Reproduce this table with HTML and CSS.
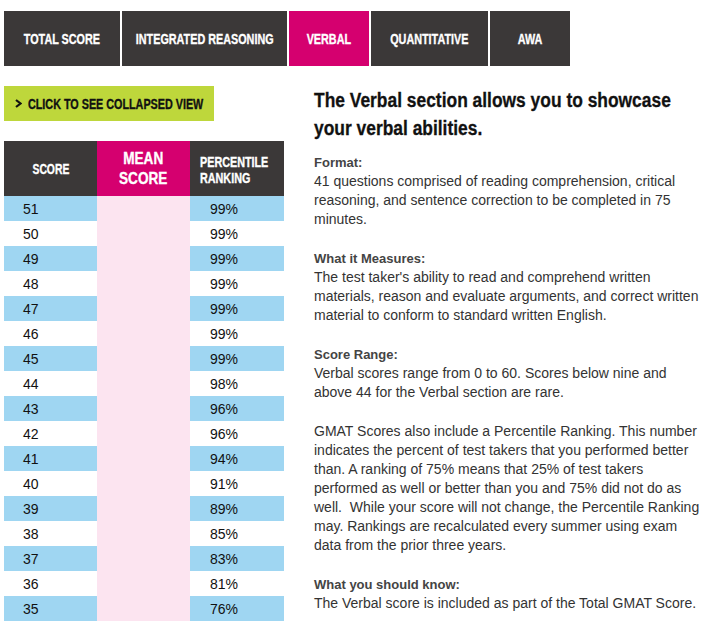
FILE: index.html
```html
<!DOCTYPE html>
<html lang="en">
<head>
<meta charset="utf-8">
<title>GMAT Verbal Scores</title>
<link rel="stylesheet" href="styles.css">
</head>
<body>
<div class="page">
  <nav class="tabs">
    <a class="tab tab-total"><span class="cond">TOTAL SCORE</span></a>
    <a class="tab tab-ir"><span class="cond">INTEGRATED REASONING</span></a>
    <a class="tab tab-verbal active"><span class="cond">VERBAL</span></a>
    <a class="tab tab-quant"><span class="cond">QUANTITATIVE</span></a>
    <a class="tab tab-awa"><span class="cond">AWA</span></a>
  </nav>
  <div class="content">
    <div class="left">
      <a class="collapse-btn"><span class="chev"><svg width="7" height="9" viewBox="0 0 7 9"><path d="M1 1 L5.5 4.5 L1 8" fill="none" stroke="#111" stroke-width="2.2"/></svg></span><span class="cond cond-left">CLICK TO SEE COLLAPSED VIEW</span></a>
      <table class="scores">
        <thead>
          <tr>
            <th class="h-score"><span class="cond">SCORE</span></th>
            <th class="h-mean"><span class="cond">MEAN<br>SCORE</span></th>
            <th class="h-pct"><span class="cond cond-left">PERCENTILE<br>RANKING</span></th>
          </tr>
        </thead>
        <tbody>
          <tr class="odd"><td class="c-score">51</td><td class="c-mean"></td><td class="c-pct">99%</td></tr>
          <tr><td class="c-score">50</td><td class="c-mean"></td><td class="c-pct">99%</td></tr>
          <tr class="odd"><td class="c-score">49</td><td class="c-mean"></td><td class="c-pct">99%</td></tr>
          <tr><td class="c-score">48</td><td class="c-mean"></td><td class="c-pct">99%</td></tr>
          <tr class="odd"><td class="c-score">47</td><td class="c-mean"></td><td class="c-pct">99%</td></tr>
          <tr><td class="c-score">46</td><td class="c-mean"></td><td class="c-pct">99%</td></tr>
          <tr class="odd"><td class="c-score">45</td><td class="c-mean"></td><td class="c-pct">99%</td></tr>
          <tr><td class="c-score">44</td><td class="c-mean"></td><td class="c-pct">98%</td></tr>
          <tr class="odd"><td class="c-score">43</td><td class="c-mean"></td><td class="c-pct">96%</td></tr>
          <tr><td class="c-score">42</td><td class="c-mean"></td><td class="c-pct">96%</td></tr>
          <tr class="odd"><td class="c-score">41</td><td class="c-mean"></td><td class="c-pct">94%</td></tr>
          <tr><td class="c-score">40</td><td class="c-mean"></td><td class="c-pct">91%</td></tr>
          <tr class="odd"><td class="c-score">39</td><td class="c-mean"></td><td class="c-pct">89%</td></tr>
          <tr><td class="c-score">38</td><td class="c-mean"></td><td class="c-pct">85%</td></tr>
          <tr class="odd"><td class="c-score">37</td><td class="c-mean"></td><td class="c-pct">83%</td></tr>
          <tr><td class="c-score">36</td><td class="c-mean"></td><td class="c-pct">81%</td></tr>
          <tr class="odd"><td class="c-score">35</td><td class="c-mean"></td><td class="c-pct">76%</td></tr>
        </tbody>
      </table>
    </div>
    <div class="right">
      <h1 class="title"><span class="title-text">The Verbal section allows you to showcase your verbal abilities.</span></h1>
      <div class="block first">
        <div class="label">Format:</div>
        <p class="text">41 questions comprised of reading comprehension, critical reasoning, and sentence correction to be completed in 75 minutes.</p>
      </div>
      <div class="block">
        <div class="label">What it Measures:</div>
        <p class="text">The test taker's ability to read and comprehend written materials, reason and evaluate arguments, and correct written material to conform to standard written English.</p>
      </div>
      <div class="block">
        <div class="label">Score Range:</div>
        <p class="text">Verbal scores range from 0 to 60. Scores below nine and above 44 for the Verbal section are rare.</p>
      </div>
      <div class="block">
        <p class="text">GMAT Scores also include a Percentile Ranking. This number indicates the percent of test takers that you performed better than. A ranking of 75% means that 25% of test takers performed as well or better than you and 75% did not do as well.&nbsp; While your score will not change, the Percentile Ranking may. Rankings are recalculated every summer using exam data from the prior three years.</p>
      </div>
      <div class="block">
        <div class="label">What you should know:</div>
        <p class="text">The Verbal score is included as part of the Total GMAT Score.</p>
      </div>
    </div>
  </div>
</div>
</body>
</html>
```

FILE: styles.css
```css
* { box-sizing: border-box; }
html, body { margin: 0; padding: 0; background: #ffffff; }
body { font-family: "Liberation Sans", Arial, Helvetica, sans-serif; overflow: hidden; }

.page { padding: 11px 4px 0 4px; }

/* condensed headline type (Helvetica Condensed Bold look) */
.cond {
  display: inline-block; white-space: nowrap;
  font-family: "Liberation Sans", Arial, sans-serif; font-weight: bold;
  transform: scaleX(0.72); transform-origin: center;
  -webkit-text-stroke: 0.35px currentColor;
}
.cond-left { transform-origin: left center; }

.tabs { display: flex; gap: 2px; height: 55px; }
.tab {
  display: flex; align-items: center; justify-content: center;
  background: #3b3838; color: #ffffff;
  font-size: 15px; text-decoration: none; overflow: hidden;
}
.tab-total { width: 116px; }
.tab-ir { width: 165px; }
.tab-verbal { width: 80px; }
.tab-quant { width: 117px; }
.tab-awa { width: 80px; }
.tab.active { background: #d5006f; }

.content { display: flex; margin-top: 20px; }
.left { width: 280px; flex: none; }
.right { margin-left: 30px; width: 392px; color: #333333; }

.collapse-btn {
  display: flex; align-items: center;
  width: 210px; height: 35px;
  background: #bed73b; color: #111111;
  padding-left: 11px;
  font-size: 14px; overflow: hidden;
}
.collapse-btn .cond { flex: none; transform: scaleX(0.77); transform-origin: left center; }
.chev { display: inline-flex; flex: none; width: 13px; }

.scores {
  margin-top: 20px;
  border-collapse: collapse; border-spacing: 0;
  width: 280px; table-layout: fixed;
}
.scores th {
  height: 55px; padding: 0; color: #ffffff; font-weight: bold;
}
.h-score { width: 93px; background: #3b3838; font-size: 14px; text-align: center; }
.h-score .cond { transform: scaleX(0.74); }
.h-mean { width: 93px; background: #d5006f; font-size: 17px; line-height: 20px; text-align: center; }
.h-mean .cond { transform: scaleX(0.8); white-space: normal; padding-top: 1px; }
.h-pct { width: 94px; background: #3b3838; font-size: 14px; line-height: 16px; text-align: left; }
.h-pct .cond { transform: scaleX(0.77); white-space: normal; margin-left: 10px; padding-top: 2px; }

.scores td {
  height: 25px; padding: 0;
  font-size: 14px; color: #111111;
}
.c-score { padding-left: 19px !important; }
.c-mean { background: #fce4f0; }
.c-pct { padding-left: 20px !important; }
.odd .c-score, .odd .c-pct { background: #9fd6f2; }

.title {
  margin: 0; width: 450px;
  font-weight: bold; font-size: 20px; line-height: 28px; color: #111111;
  transform: scaleX(0.87); transform-origin: left top;
  -webkit-text-stroke: 0.3px #111111;
}
.block { margin-top: 20px; }
.block.first { margin-top: 11px; }
.label { font-weight: bold; font-size: 13px; line-height: 19px; color: #444444; }
.text { margin: 0; font-size: 14px; line-height: 19px; }
```
